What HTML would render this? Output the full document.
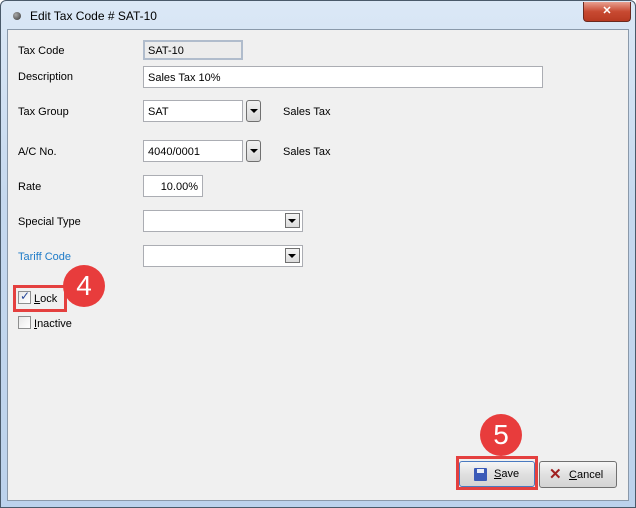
<!DOCTYPE html>
<html><head><style>
body{margin:0;width:636px;height:508px;overflow:hidden;font-family:"Liberation Sans",sans-serif;font-size:11px;color:#000;}
.frame{position:absolute;left:0;top:0;width:634px;height:506px;border:1px solid #4a5a6a;border-radius:6px 6px 0 0;background:linear-gradient(180deg,#dbe8f6 0%,#c5d8ee 40%,#bcd2ec 100%);}
.title{position:absolute;left:29px;top:8px;font-size:12px;color:#000;}
.dot{position:absolute;left:12px;top:11px;width:8px;height:8px;border-radius:50%;background:radial-gradient(circle at 35% 35%,#aaa,#333);}
.close{position:absolute;left:582px;top:1px;width:46px;height:19px;border:1px solid #6b2a20;border-top:none;border-radius:0 0 4px 4px;background:linear-gradient(#e8a090,#c84a32 50%,#b83a22);color:#fff;font-weight:bold;font-size:11px;text-align:center;line-height:18px;}
.panel{position:absolute;left:7px;top:29px;width:620px;height:470px;background:#f0f0f0;border:1px solid #8a99aa;}
.l{position:absolute;left:18px;}
.in{position:absolute;background:#fff;border:1px solid #abadb3;height:20px;box-sizing:border-box;padding:4px 4px;}
.dd{position:absolute;width:15px;height:22px;box-sizing:border-box;border:1px solid #707070;border-radius:3px;background:linear-gradient(#f2f2f2,#d8d8d8);}
.dd:after,.cb:after{content:"";position:absolute;left:3px;top:8px;border-left:4px solid transparent;border-right:4px solid transparent;border-top:4px solid #000;}
.cb{position:absolute;width:15px;height:15px;box-sizing:border-box;border:1px solid #707070;background:linear-gradient(#f4f4f4,#dcdcdc);}
.cb:after{left:2px;top:5px;}
.chk{position:absolute;width:13px;height:13px;box-sizing:border-box;border:1px solid #8e8f8f;background:linear-gradient(135deg,#e8e8e8,#fff);}
.btn{position:absolute;height:24px;box-sizing:border-box;border:1px solid #707070;border-radius:3px;background:linear-gradient(#f6f6f6,#e0e0e0 50%,#d4d4d4);font-size:11px;line-height:24px;}
.badge{position:absolute;width:42px;height:42px;border-radius:50%;background:#e83c3c;color:#fff;font-size:28px;text-align:center;line-height:42px;}
.red{position:absolute;border:3px solid #e4403f;box-sizing:border-box;}
</style></head><body>
<div class="frame">
<div class="dot"></div><div class="title">Edit Tax Code # SAT-10</div>
<div class="close">✕</div>
</div>
<div class="panel"></div>
<div class="l" style="top:45px">Tax Code</div>
<div class="in" style="left:143px;top:40px;width:100px;background:#ececec;border:2px solid #b0bccc;padding:3px 3px">SAT-10</div>
<div class="l" style="top:71px">Description</div>
<div class="in" style="left:143px;top:66px;width:400px;height:22px;padding-top:5px">Sales Tax 10%</div>
<div class="l" style="top:106px">Tax Group</div>
<div class="in" style="left:143px;top:100px;width:100px;height:22px;padding-top:5px">SAT</div>
<div class="dd" style="left:246px;top:100px"></div>
<div style="position:absolute;left:283px;top:106px">Sales Tax</div>
<div class="l" style="top:146px">A/C No.</div>
<div class="in" style="left:143px;top:140px;width:100px;height:22px;padding-top:5px">4040/0001</div>
<div class="dd" style="left:246px;top:140px"></div>
<div style="position:absolute;left:283px;top:146px">Sales Tax</div>
<div class="l" style="top:181px">Rate</div>
<div class="in" style="left:143px;top:175px;width:60px;height:22px;padding-top:5px;text-align:right">10.00%</div>
<div class="l" style="top:216px">Special Type</div>
<div class="in" style="left:143px;top:210px;width:160px;height:22px"></div>
<div class="cb" style="left:285px;top:213px"></div>
<div class="l" style="top:251px;color:#1e7bc8">Tariff Code</div>
<div class="in" style="left:143px;top:245px;width:160px;height:22px"></div>
<div class="cb" style="left:285px;top:248px"></div>
<div class="chk" style="left:18px;top:291px"><span style="position:absolute;left:1px;top:-3px;color:#2a4a9a;font-size:12px">✓</span></div>
<div style="position:absolute;left:34px;top:293px"><u>L</u>ock</div>
<div class="red" style="left:13px;top:285px;width:54px;height:27px"></div>
<div class="badge" style="left:63px;top:265px">4</div>
<div class="chk" style="left:18px;top:316px"></div>
<div style="position:absolute;left:34px;top:318px"><u>I</u>nactive</div>
<div class="btn" style="left:459px;top:461px;width:76px;height:26px;border-color:#4a7ac0"><span style="position:absolute;left:14px;top:6px;width:13px;height:13px;background:#3a5ab8;border-radius:1px"></span><span style="position:absolute;left:17px;top:7px;width:7px;height:4px;background:#e8eef8"></span><span style="position:absolute;left:34px"><u>S</u>ave</span></div>
<div class="red" style="left:456px;top:456px;width:82px;height:34px"></div>
<div class="badge" style="left:480px;top:414px">5</div>
<div class="btn" style="left:539px;top:461px;width:78px;height:27px;line-height:26px"><span style="position:absolute;left:9px;color:#a02020;font-size:15px;font-weight:bold">✕</span><span style="position:absolute;left:29px"><u>C</u>ancel</span></div>
</body></html>
